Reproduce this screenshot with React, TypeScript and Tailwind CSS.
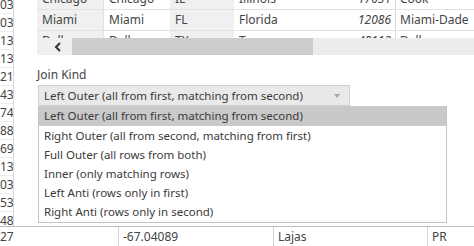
const font = { fontFamily: '"Noto Sans", "Open Sans", sans-serif' };

const stripRows = ["03", "03", "13", "13", "21", "43", "74", "88", "69", "13", "03", "53", "48"];

const tableRows = [
  ["Chicago", "Chicago", "IL", "Illinois", "17031", "Cook"],
  ["Miami", "Miami", "FL", "Florida", "12086", "Miami-Dade"],
  ["Dallas", "Dallas", "TX", "Texas", "48113", "Dallas"],
];

const joinKinds = [
  "Left Outer (all from first, matching from second)",
  "Right Outer (all from second, matching from first)",
  "Full Outer (all rows from both)",
  "Inner (only matching rows)",
  "Left Anti (rows only in first)",
  "Right Anti (rows only in second)",
];

function SheetStrip() {
  return (
    <div className="w-[14px] shrink-0 overflow-hidden border-r border-[#d6d6d6]">
      <div className="-mt-[4px]">
        {stripRows.map((n, i) => (
          <div
            key={i}
            className="h-[18px] w-[20px] border-b border-[#ececec] text-[12px] leading-[18px] text-[#444]"
          >
            {n}
          </div>
        ))}
      </div>
    </div>
  );
}

function PreviewTable() {
  return (
    <div className="h-[38px] overflow-hidden">
      <div className="-mt-[11px]">
        {tableRows.map((r, i) => (
          <div
            key={i}
            className="flex h-[21px] border-b border-[#e2e2e2] text-[12px] leading-[20px] text-[#444]"
          >
            <div className="w-[66px] shrink-0 bg-[#f0f0f0] pl-[5px]">{r[0]}</div>
            <div className="w-[67px] shrink-0 border-l border-[#e2e2e2] pl-[5px]">{r[1]}</div>
            <div className="w-[64px] shrink-0 bg-[#f0f0f0] pl-[5px]">{r[2]}</div>
            <div className="w-[86px] shrink-0 pl-[5px]">{r[3]}</div>
            <div className="w-[75px] shrink-0 pr-[4px] text-right italic">{r[4]}</div>
            <div className="flex-1 border-l border-[#d8d8d8] pl-[4px]">{r[5]}</div>
          </div>
        ))}
      </div>
    </div>
  );
}

function ScrollBar() {
  return (
    <div className="flex h-[17px]">
      <div className="flex w-[35px] items-center justify-center bg-[#efefef] pl-[6px]">
        <svg width="8" height="10" viewBox="0 0 8 10">
          <polyline points="6,1 2,5 6,9" fill="none" stroke="#333" strokeWidth="2" />
        </svg>
      </div>
      <div className="w-[241px] bg-[#cdcdcd]" />
      <div className="flex-1 bg-[#ececec]" />
    </div>
  );
}

function JoinKind() {
  return (
    <div className="mt-[12px]">
      <div className="h-[16px] text-[12px] leading-[16px] text-[#444]">Join Kind</div>
      <div className="ml-[1px] mt-[2px] flex h-[21px] w-[312px] items-center justify-between border border-[#d0d0d0] bg-[#e9e9e9] pl-[5px] pr-[9px] text-[11.5px] text-[#3a3a3a]">
        <span>{joinKinds[0]}</span>
        <svg width="6" height="4" viewBox="0 0 6 4">
          <polygon points="0,0 6,0 3,4" fill="#a8a8a8" />
        </svg>
      </div>
      <div className="ml-[1px] w-[409px] border border-t-0 border-[#c4c4c4] bg-white pb-[1px] text-[11.5px] text-[#3a3a3a]">
        {joinKinds.map((k, i) => (
          <div
            key={k}
            className={
              i === 0
                ? "h-[20px] bg-[#c9c9c9] pl-[5px] leading-[20px]"
                : "h-[19px] pl-[5px] leading-[19px]"
            }
          >
            {k}
          </div>
        ))}
      </div>
    </div>
  );
}

export default function App() {
  return (
    <div className="flex h-[246px] w-[474px] flex-col overflow-hidden bg-white" style={font}>
      <div className="flex h-[226px] shrink-0">
        <SheetStrip />
        <div className="flex-1 pl-[23px]">
          <PreviewTable />
          <ScrollBar />
          <JoinKind />
        </div>
      </div>
      {/* sheet row under the dialog */}
      <div className="flex h-[20px] border-t border-[#bdbdbd] text-[12px] leading-[20px] text-[#444]">
        <div className="w-[118px] shrink-0">27</div>
        <div className="w-[155px] shrink-0 border-l border-[#d6d6d6] pl-[4px]">-67.04089</div>
        <div className="w-[154px] shrink-0 border-l border-[#d6d6d6] pl-[4px]">Lajas</div>
        <div className="flex-1 border-l border-[#d6d6d6] pl-[4px]">PR</div>
      </div>
    </div>
  );
}
